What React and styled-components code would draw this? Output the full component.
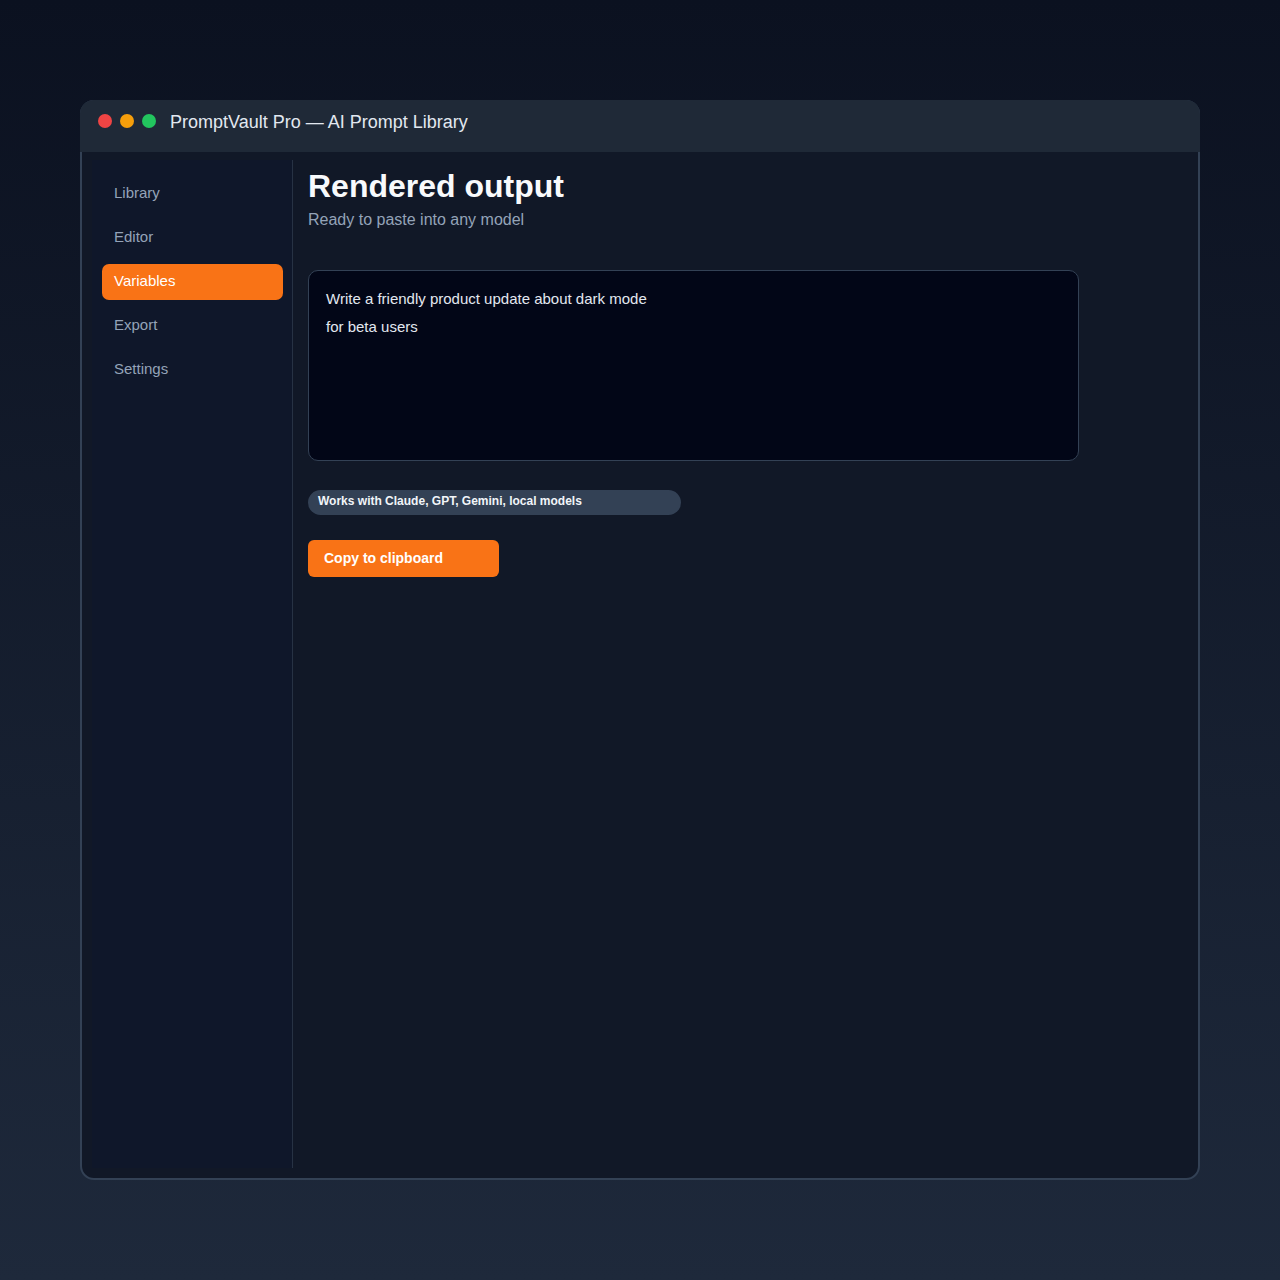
import React from 'react'
import styled, { createGlobalStyle } from 'styled-components'

const GlobalStyle = createGlobalStyle`
    html, body {
        margin: 0;
        padding: 0;
    }
    body {
        font-family: "Liberation Sans", Arial, sans-serif;
        background: linear-gradient(180deg, #0b1120 0%, #1e293b 100%);
        min-height: 1280px;
    }
`

const navItems = ['Library', 'Editor', 'Variables', 'Export', 'Settings']

export default function App() {
    return (
        <Page>
            <GlobalStyle />
            <Window>
                <TitleBar>
                    <Dots>
                        <Dot color="#ef4444" />
                        <Dot color="#f59e0b" />
                        <Dot color="#22c55e" />
                    </Dots>
                    <WindowTitle>PromptVault Pro — AI Prompt Library</WindowTitle>
                </TitleBar>
                <Body>
                    <Sidebar>
                        {navItems.map(item => (
                            <NavItem key={item} active={item === 'Variables'}>{item}</NavItem>
                        ))}
                    </Sidebar>
                    <Main>
                        <Heading>Rendered output</Heading>
                        <Subheading>Ready to paste into any model</Subheading>
                        <OutputBox>
                            Write a friendly product update about dark mode<br />
                            for beta users
                        </OutputBox>
                        <Pill>Works with Claude, GPT, Gemini, local models</Pill>
                        <CopyButton>Copy to clipboard</CopyButton>
                    </Main>
                </Body>
            </Window>
        </Page>
    )
}

const Page = styled.div`
    padding: 100px 80px;
`

const Window = styled.div`
    height: 1080px;
    box-sizing: border-box;
    border: 2px solid #334155;
    border-radius: 14px;
    background: #111827;
    display: flex;
    flex-direction: column;
`

const TitleBar = styled.div`
    margin: -2px -2px 0;
    height: 52px;
    box-sizing: border-box;
    background: #1f2937;
    border-radius: 14px 14px 0 0;
    display: flex;
    align-items: center;
    padding: 0 18px 10px;
    gap: 14px;
`

const Dots = styled.div`
    display: flex;
    gap: 8px;
`

const Dot = styled.span`
    width: 14px;
    height: 14px;
    border-radius: 50%;
    background: ${p => p.color};
`

const WindowTitle = styled.div`
    padding-top: 3px;
    font-size: 18px;
    color: #e2e8f0;
`

const Body = styled.div`
    flex: 1;
    display: flex;
    padding: 8px 10px 10px;
    min-height: 0;
`

const Sidebar = styled.div`
    width: 201px;
    background: #0f172a;
    border-right: 1px solid #273244;
    padding: 16px 9px 0 10px;
    box-sizing: border-box;
    display: flex;
    flex-direction: column;
    gap: 8px;
`

const NavItem = styled.div`
    height: 36px;
    box-sizing: border-box;
    display: flex;
    align-items: center;
    padding: 0 0 4px 12px;
    border-radius: 7px;
    font-size: 15px;
    color: ${p => p.active ? '#ffffff' : '#94a3b8'};
    background: ${p => p.active ? '#f97316' : 'transparent'};
`

const Main = styled.div`
    flex: 1;
    padding: 8px 15px;
    display: flex;
    flex-direction: column;
    align-items: flex-start;
`

const Heading = styled.h1`
    margin: 0;
    font-size: 32px;
    line-height: 36px;
    font-weight: 700;
    color: #f8fafc;
`

const Subheading = styled.div`
    margin-top: 7px;
    font-size: 16px;
    color: #94a3b8;
`

const OutputBox = styled.div`
    margin-top: 41px;
    width: 771px;
    height: 191px;
    box-sizing: border-box;
    background: #020617;
    border: 1px solid #334155;
    border-radius: 10px;
    padding: 14px 17px;
    font-size: 15px;
    line-height: 28px;
    color: #e2e8f0;
`

const Pill = styled.div`
    margin-top: 29px;
    width: 373px;
    height: 25px;
    box-sizing: border-box;
    background: #334155;
    border-radius: 999px;
    padding: 0 10px 3px;
    display: flex;
    align-items: center;
    font-size: 12px;
    font-weight: 700;
    color: #f1f5f9;
`

const CopyButton = styled.button`
    margin-top: 25px;
    width: 191px;
    height: 37px;
    border: 0;
    border-radius: 6px;
    background: #f97316;
    color: #ffffff;
    font-family: inherit;
    font-size: 14px;
    font-weight: 700;
    text-align: left;
    padding: 0 16px 2px;
`
